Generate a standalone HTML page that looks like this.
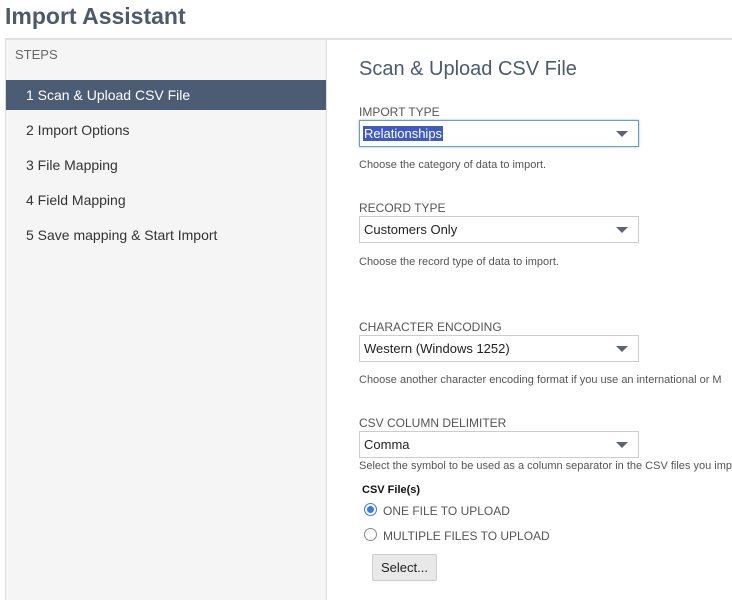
<!DOCTYPE html>
<html><head><style>
body{margin:0;width:732px;height:595px;overflow:hidden;background:#fff;font-family:"Liberation Sans",sans-serif;position:relative}
.a{position:absolute;white-space:nowrap}
h1{position:absolute;left:5px;top:3px;margin:0;font-size:23px;font-weight:bold;color:#4d5a6b}
.left{position:absolute;left:5px;top:38px;width:320px;height:560px;background:#f5f5f5;border-top:2px solid #e0e0e0;border-left:1px solid #ddd;border-right:1px solid #ddd}
.topline{position:absolute;left:326px;top:38px;width:406px;height:2px;background:#e0e0e0}
.step{position:absolute;left:26px;font-size:14px;color:#333}
.sel{position:absolute;left:6px;top:80px;width:320px;height:30px;background:#4d5c75}
.lbl{font-size:12px;color:#555;left:359px}
.help{font-size:11px;color:#555;left:359px}
.box{position:absolute;left:359px;width:278px;height:25px;border:1px solid #ccc;background:#fff;font-size:13px;color:#222}
.box span{position:absolute;left:4px;top:5px}
.box i{position:absolute;right:10px;top:10px;border-left:6px solid transparent;border-right:6px solid transparent;border-top:6px solid #5a6478}
.rad{position:absolute;left:364px;width:11px;height:11px;border:1px solid #888;border-radius:50%;background:#fff}
</style></head><body>
<h1>Import Assistant</h1>
<div class="left"></div><div class="topline"></div>
<div class="a" style="left:15px;top:47px;font-size:13px;color:#666">STEPS</div>
<div class="sel"></div>
<div class="step a" style="top:87px;color:#fff">1 Scan &amp; Upload CSV File</div>
<div class="step a" style="top:122px">2 Import Options</div>
<div class="step a" style="top:157px">3 File Mapping</div>
<div class="step a" style="top:192px">4 Field Mapping</div>
<div class="step a" style="top:227px">5 Save mapping &amp; Start Import</div>
<div class="a" style="left:359px;top:58px;font-size:20px;color:#4d5a6b">Scan &amp; Upload CSV File</div>
<div class="a lbl" style="top:105px">IMPORT TYPE</div>
<div class="box" style="top:120px;border:1px solid #6a9ad8;box-shadow:0 0 2px #8ab4e8"><span style="background:#3f5bc0;color:#fff;padding:0 1px;left:3px">Relationships</span><i></i></div>
<div class="a help" style="top:159px">Choose the category of data to import.</div>
<div class="a lbl" style="top:201px">RECORD TYPE</div>
<div class="box" style="top:216px"><span>Customers Only</span><i></i></div>
<div class="a help" style="top:256px">Choose the record type of data to import.</div>
<div class="a lbl" style="top:320px">CHARACTER ENCODING</div>
<div class="box" style="top:335px"><span>Western (Windows 1252)</span><i></i></div>
<div class="a help" style="top:374px">Choose another character encoding format if you use an international or M</div>
<div class="a lbl" style="top:416px">CSV COLUMN DELIMITER</div>
<div class="box" style="top:431px"><span>Comma</span><i></i></div>
<div class="a help" style="top:460px">Select the symbol to be used as a column separator in the CSV files you imp</div>
<div class="a" style="left:362px;top:484px;font-size:11px;font-weight:bold;color:#111">CSV File(s)</div>
<div class="rad" style="top:503px;border-color:#3b7dd8"><div style="position:absolute;left:2px;top:2px;width:7px;height:7px;border-radius:50%;background:#3b7dd8"></div></div>
<div class="a" style="left:383px;top:504px;font-size:12px;color:#555">ONE FILE TO UPLOAD</div>
<div class="rad" style="top:528px"></div>
<div class="a" style="left:383px;top:529px;font-size:12px;color:#555">MULTIPLE FILES TO UPLOAD</div>
<div class="a" style="left:372px;top:554px;width:63px;height:25px;border:1px solid #ccc;border-radius:2px;background:#e8e8e8;font-size:13px;color:#222;text-align:center;line-height:25px">Select...</div>
</body></html>
